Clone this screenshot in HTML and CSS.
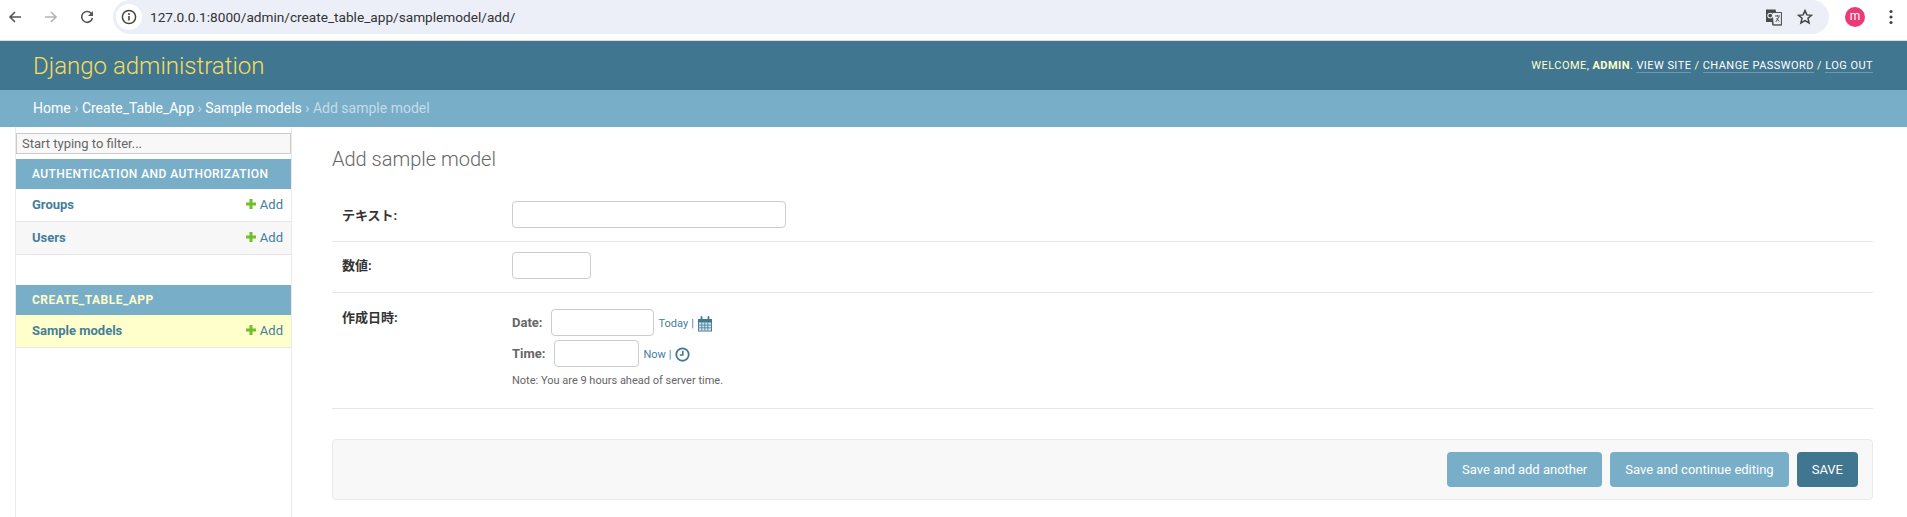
FILE: index.html
```html
<!DOCTYPE html>
<html lang="en">
<head>
<meta charset="utf-8">
<title>Add sample model</title>
<link rel="stylesheet" href="styles.css">
</head>
<body>
<div class="chrome">
  <div class="nav">
    <svg class="nav-icon" viewBox="0 0 16 16"><path d="M14 8H3M8 3 3 8l5 5" fill="none" stroke="#555" stroke-width="1.6"/></svg>
    <svg class="nav-icon" viewBox="0 0 16 16"><path d="M2 8h11M8 3l5 5-5 5" fill="none" stroke="#b4b4b4" stroke-width="1.6"/></svg>
    <svg class="nav-icon" viewBox="0 0 16 16"><path d="M12.9 5.4A5.4 5.4 0 1 0 13.4 9" fill="none" stroke="#555" stroke-width="1.6"/><path d="M14 2v5H9z" fill="#555"/></svg>
  </div>
  <div class="omnibox">
    <span class="site-info">
      <svg viewBox="0 0 16 16" width="16" height="16"><circle cx="8" cy="8" r="6.6" fill="none" stroke="#444" stroke-width="1.5"/><path d="M8 7v4.4" stroke="#444" stroke-width="1.6"/><circle cx="8" cy="4.9" r="1" fill="#444"/></svg>
    </span>
    <span class="url">127.0.0.1:8000/admin/create_table_app/samplemodel/add/</span>
    <span class="omni-right">
      <svg viewBox="0 0 18 18" width="18" height="18"><path d="M1 1.5h9.5l.8 3H17v13H7.5L6.8 14H1z" fill="#4a4a4a"/><path d="M7.2 4.5h9.2v12.3H8.2z" fill="#eceff8" stroke="#4a4a4a" stroke-width=".9"/><circle cx="5.2" cy="7.6" r="2.4" fill="none" stroke="#eceff8" stroke-width="1.1"/><path d="M10 8h5M12.5 7v1.4M10.8 14l3.2-5.5M11.6 10l2.6 3.6" stroke="#4a4a4a" fill="none" stroke-width=".9"/></svg>
      <svg viewBox="0 0 16 16" width="16" height="16"><path d="m8 1.6 1.9 4.3 4.6.4-3.5 3 1.1 4.6L8 11.5l-4.1 2.4L5 9.3l-3.5-3 4.6-.4z" fill="none" stroke="#444" stroke-width="1.5"/></svg>
    </span>
  </div>
  <div class="profile">
    <span class="avatar">m</span>
    <svg viewBox="0 0 4 16" width="4" height="16"><circle cx="2" cy="2.5" r="1.6" fill="#444"/><circle cx="2" cy="8" r="1.6" fill="#444"/><circle cx="2" cy="13.5" r="1.6" fill="#444"/></svg>
  </div>
</div>

<header class="header">
  <div class="branding">Django administration</div>
  <div class="user-tools">
    Welcome, <strong>admin</strong>.
    <a class="tool-link">View site</a> /
    <a class="tool-link">Change password</a> /
    <a class="tool-link">Log out</a>
  </div>
</header>

<nav class="breadcrumbs">
  <a>Home</a> <span class="sep">›</span> <a>Create_Table_App</a> <span class="sep">›</span> <a>Sample models</a> <span class="sep">›</span> Add sample model
</nav>

<div class="main">
  <aside class="sidebar">
    <input class="nav-filter" type="text" placeholder="Start typing to filter...">
    <section class="module">
      <h2 class="caption">Authentication and Authorization</h2>
      <div class="model-row"><a class="model-name">Groups</a><a class="addlink"><svg class="plus" viewBox="0 0 12 12"><path d="M4.5 1h3v3.500h3.500v3H7.500V11h-3V7.500H1v-3h3.500z" fill="#70bf2b"/></svg>Add</a></div>
      <div class="model-row alt"><a class="model-name">Users</a><a class="addlink"><svg class="plus" viewBox="0 0 12 12"><path d="M4.5 1h3v3.500h3.500v3H7.500V11h-3V7.500H1v-3h3.500z" fill="#70bf2b"/></svg>Add</a></div>
    </section>
    <section class="module">
      <h2 class="caption current">Create_Table_App</h2>
      <div class="model-row selected"><a class="model-name">Sample models</a><a class="addlink"><svg class="plus" viewBox="0 0 12 12"><path d="M4.5 1h3v3.500h3.500v3H7.500V11h-3V7.500H1v-3h3.500z" fill="#70bf2b"/></svg>Add</a></div>
    </section>
  </aside>

  <main class="content">
    <h1 class="title">Add sample model</h1>
    <form class="form">
      <div class="form-row first">
        <label class="field-label">テキスト:</label>
        <input class="field text-field" type="text">
      </div>
      <div class="form-row">
        <label class="field-label">数値:</label>
        <input class="field num-field" type="text">
      </div>
      <div class="form-row last">
        <label class="field-label top">作成日時:</label>
        <div class="datetime">
          <div class="dt-line">
            <span class="dt-label date">Date:</span>
            <input class="field date-field" type="text">
            <span class="shortcuts"><a>Today</a> | 
              <svg class="cal" viewBox="0 0 16 16"><path d="M1 3h14v12.500H1z" fill="#417893"/><path d="M1.900 6.500h12.200v8.100H1.900z" fill="#d5e3ea"/><path d="M4.800 6.500v8M7.800 6.500v8M10.800 6.500v8M2 9.100h12M2 11.800h12" stroke="#417893" stroke-width=".8"/><path d="M4.500 1v3.500M11.500 1v3.500" stroke="#417893" stroke-width="1.800" stroke-linecap="round"/></svg>
            </span>
          </div>
          <div class="dt-line">
            <span class="dt-label">Time:</span>
            <input class="field time-field" type="text">
            <span class="shortcuts now"><a>Now</a> | 
              <svg class="clock" viewBox="0 0 14 14"><circle cx="7" cy="7" r="5.800" fill="none" stroke="#417893" stroke-width="1.700"/><path d="M7.300 3.600v3.800H4.500" fill="none" stroke="#417893" stroke-width="1.500"/></svg>
            </span>
          </div>
          <div class="timezone">Note: You are 9 hours ahead of server time.</div>
        </div>
      </div>
      <div class="submit-row">
        <button class="btn" type="button">Save and add another</button>
        <button class="btn" type="button">Save and continue editing</button>
        <button class="btn default" type="button">SAVE</button>
      </div>
    </form>
  </main>
</div>
</body>
</html>
```
FILE: styles.css
```css
html, body {
  margin: 0;
  height: 517px;
  overflow: hidden;
  background: #fff;
}
body {
  font-family: Roboto, "Noto Sans CJK JP", sans-serif;
  font-size: 14px;
  color: #333;
}
a { text-decoration: none; }

/* Browser chrome */
.chrome {
  height: 40px;
  border-bottom: 1px solid #dcdcdc;
  display: flex;
  align-items: flex-start;
  background: #fff;
}
.nav {
  width: 113px;
  height: 34px;
  display: flex;
  align-items: center;
  gap: 20px;
  padding-left: 7px;
  box-sizing: border-box;
}
.nav-icon { width: 16px; height: 16px; }
.omnibox {
  flex: 1;
  height: 34px;
  background: #eceff8;
  border-radius: 17px;
  display: flex;
  align-items: center;
  padding: 0 16px 0 3px;
}
.site-info {
  width: 26px;
  height: 26px;
  border-radius: 50%;
  background: #fff;
  display: flex;
  align-items: center;
  justify-content: center;
}
.url {
  margin-left: 8px;
  font-size: 13.65px;
  color: #333;
  flex: 1;
}
.omni-right {
  display: flex;
  align-items: center;
  gap: 14px;
}
.profile {
  width: 78px;
  height: 34px;
  display: flex;
  align-items: center;
  justify-content: space-between;
  padding: 0 14px 0 16px;
  box-sizing: border-box;
}
.avatar {
  width: 20px;
  height: 20px;
  border-radius: 50%;
  background: #ec3a77;
  color: #fff;
  font-size: 12px;
  line-height: 18px;
  text-align: center;
}

/* Django header */
.header {
  height: 49px;
  background: #417690;
  display: flex;
  align-items: center;
  justify-content: space-between;
  padding: 0 34px 0 33px;
}
.branding {
  font-size: 24px;
  font-weight: 300;
  color: #f5dd5d;
}
.user-tools {
  font-size: 11px;
  letter-spacing: .45px;
  text-transform: uppercase;
  color: #ffc;
  font-weight: 400;
}
.user-tools strong { font-weight: 700; }
.tool-link {
  color: #fff;
  border-bottom: 1px solid rgba(255, 255, 255, .25);
}
.breadcrumbs {
  height: 37px;
  line-height: 37px;
  background: #79aec8;
  color: #c4dce8;
  padding-left: 33px;
  font-size: 14px;
}
.breadcrumbs a { color: #fff; }
.sep { color: #c4dce8; }

/* Layout */
.main {
  display: flex;
  height: 390px;
}
.sidebar {
  width: 275px;
  margin-left: 15px;
  flex: none;
  border-left: 1px solid #eaeaea;
  border-right: 1px solid #eaeaea;
  padding-top: 6px;
  box-sizing: content-box;
}
.nav-filter {
  display: block;
  width: 100%;
  height: 21px;
  box-sizing: border-box;
  margin: 0 0 5px;
  padding: 0 5px;
  border: 1px solid #ccc;
  background: #f8f8f8;
  font: 13px Roboto, sans-serif;
  color: #333;
}
.nav-filter::placeholder { color: #666; opacity: 1; }
.module { margin-bottom: 30px; }
.caption {
  margin: 0;
  height: 30px;
  line-height: 30px;
  padding-left: 16px;
  background: #79aec8;
  color: #fff;
  font-size: 12px;
  font-weight: 500;
  letter-spacing: .42px;
  text-transform: uppercase;
}
.caption.current { color: #ffc; font-weight: 700; letter-spacing: .5px; }
.model-row {
  border-bottom: 1px solid #e6e6e6;
  display: flex;
  align-items: center;
  justify-content: space-between;
  padding: 0 8px 2px 16px;
  height: 30px;
  background: #fff;
}
.model-row.alt { background: #f7f7f7; }
.model-row.selected { background: #ffc; }
.model-name {
  color: #447e9b;
  font-size: 13px;
  font-weight: 700;
}
.addlink {
  color: #447e9b;
  font-size: 13px;
  display: flex;
  align-items: center;
}
.plus { width: 12px; height: 12px; margin-right: 3px; }

/* Content */
.content {
  flex: 1;
  padding: 0 34px 0 40px;
}
.title {
  margin: 0;
  height: 74px;
  line-height: 64px;
  font-size: 20px;
  font-weight: 300;
  color: #666;
}
.form-row {
  display: flex;
  align-items: flex-start;
  padding: 10px 0 0 10px;
  border-bottom: 1px solid #e6e6e6;
  height: 51px;
  box-sizing: border-box;
}
.form-row.first { height: 41px; padding-top: 0; }
.form-row.last { height: 116px; padding-top: 16px; }
.field-label {
  width: 170px;
  flex: none;
  font-size: 13px;
  font-weight: 700;
  color: #333;
  line-height: 27px;
}
.form-row.first .field-label { line-height: 29px; }
.field-label.top { line-height: 28px; margin-top: -5px; }
.field {
  box-sizing: border-box;
  height: 27px;
  border: 1px solid #ccc;
  border-radius: 4px;
  background: #fff;
  padding: 0;
  margin: 0;
}
.text-field { width: 274px; }
.num-field { width: 79px; }
.date-field { width: 103px; }
.time-field { width: 85px; }
.datetime { display: flex; flex-direction: column; }
.dt-line {
  display: flex;
  align-items: center;
  height: 27px;
  margin-bottom: 4px;
}
.dt-label {
  font-size: 13px;
  font-weight: 700;
  color: #666;
  margin-right: 9px;
}
.dt-label.date { margin-right: 8px; }
.shortcuts {
  font-size: 11px;
  color: #447e9b;
  margin-left: 5px;
  padding-top: 2px;
  display: flex;
  align-items: center;
  gap: 3px;
}
.shortcuts.now { margin-left: 4px; }
.shortcuts a { color: #447e9b; }
.cal { width: 16px; height: 16px; }
.clock { width: 15px; height: 15px; }
.timezone {
  font-size: 11px;
  color: #666;
  margin-top: 3px;
}
.submit-row {
  margin-top: 30px;
  height: 61px;
  box-sizing: border-box;
  background: #f8f8f8;
  border: 1px solid #eaeaea;
  border-radius: 4px;
  display: flex;
  justify-content: flex-end;
  align-items: center;
  gap: 8px;
  padding: 0 14px;
}
.btn {
  height: 35px;
  border: 0;
  border-radius: 4px;
  background: #79aec8;
  color: #fff;
  font: 400 13px Roboto, sans-serif;
  padding: 0 15px;
}
.btn.default { background: #417690; }
```
